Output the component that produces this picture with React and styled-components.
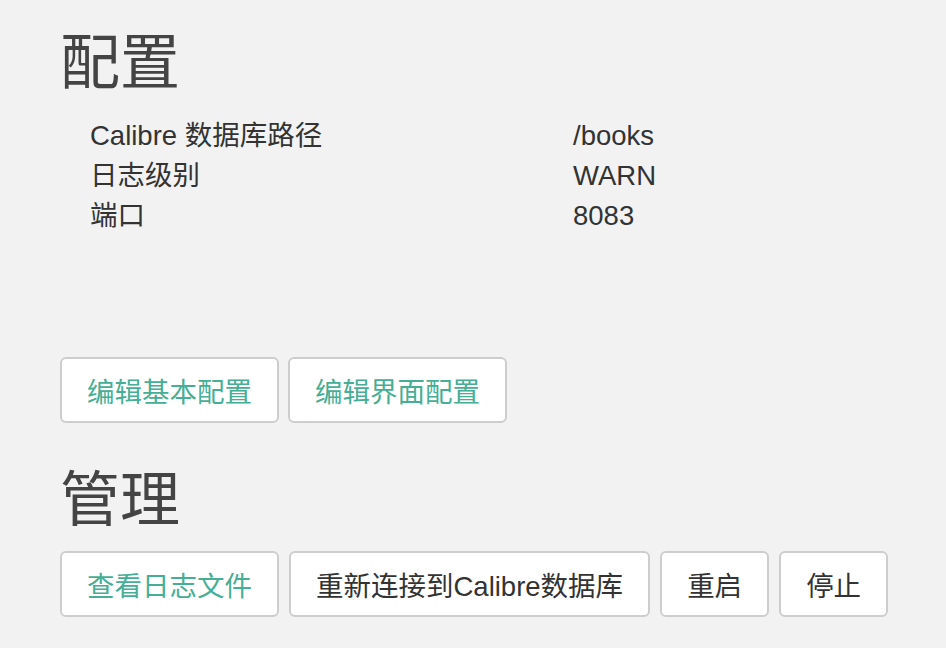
import React from 'react'
import styled, { createGlobalStyle } from 'styled-components'

const GlobalStyle = createGlobalStyle`
  html, body {
    margin: 0;
    padding: 0;
    background: #f2f2f2;
  }
  body {
    font-family: "Liberation Sans", "Noto Sans CJK SC", sans-serif;
    color: #333;
  }
`

const Page = styled.div`
  padding: 24px 60px 0;
  width: 946px;
  height: 648px;
  box-sizing: border-box;
  overflow: hidden;
`

const Heading = styled.h2`
  margin: 0;
  font-size: 60px;
  font-weight: 400;
  line-height: 80px;
  color: #444;
  margin-top: ${props => props.$top || 0}px;
`

const ConfigTable = styled.div`
  display: grid;
  grid-template-columns: 483px auto;
  padding-left: 30px;
  margin-top: 12px;
  font-size: 27.5px;
  line-height: 40px;
  color: #333;
`

const ButtonRow = styled.div`
  display: flex;
  gap: ${props => props.$gap || 10}px;
  margin-top: ${props => props.$top || 0}px;
`

const Button = styled.button`
  flex-shrink: 0;
  height: 66px;
  padding: 0 25px;
  background: #fff;
  border: 2px solid #cdcdcd;
  border-radius: 6px;
  font-family: inherit;
  font-size: 27.5px;
  white-space: nowrap;
  color: ${props => (props.$accent ? '#45ae94' : '#333')};
  cursor: pointer;
`

const config = [
  ['Calibre 数据库路径', '/books'],
  ['日志级别', 'WARN'],
  ['端口', '8083'],
]

export default function App() {
  return (
    <>
      <GlobalStyle />
      <Page>
        <Heading>配置</Heading>
        <ConfigTable>
          {config.map(([label, value]) => (
            <React.Fragment key={label}>
              <span>{label}</span>
              <span>{value}</span>
            </React.Fragment>
          ))}
        </ConfigTable>
        <ButtonRow $top={121} $gap={9}>
          <Button $accent>编辑基本配置</Button>
          <Button $accent>编辑界面配置</Button>
        </ButtonRow>
        <Heading $top={38}>管理</Heading>
        <ButtonRow $top={10}>
          <Button $accent>查看日志文件</Button>
          <Button>重新连接到Calibre数据库</Button>
          <Button>重启</Button>
          <Button>停止</Button>
        </ButtonRow>
      </Page>
    </>
  )
}
